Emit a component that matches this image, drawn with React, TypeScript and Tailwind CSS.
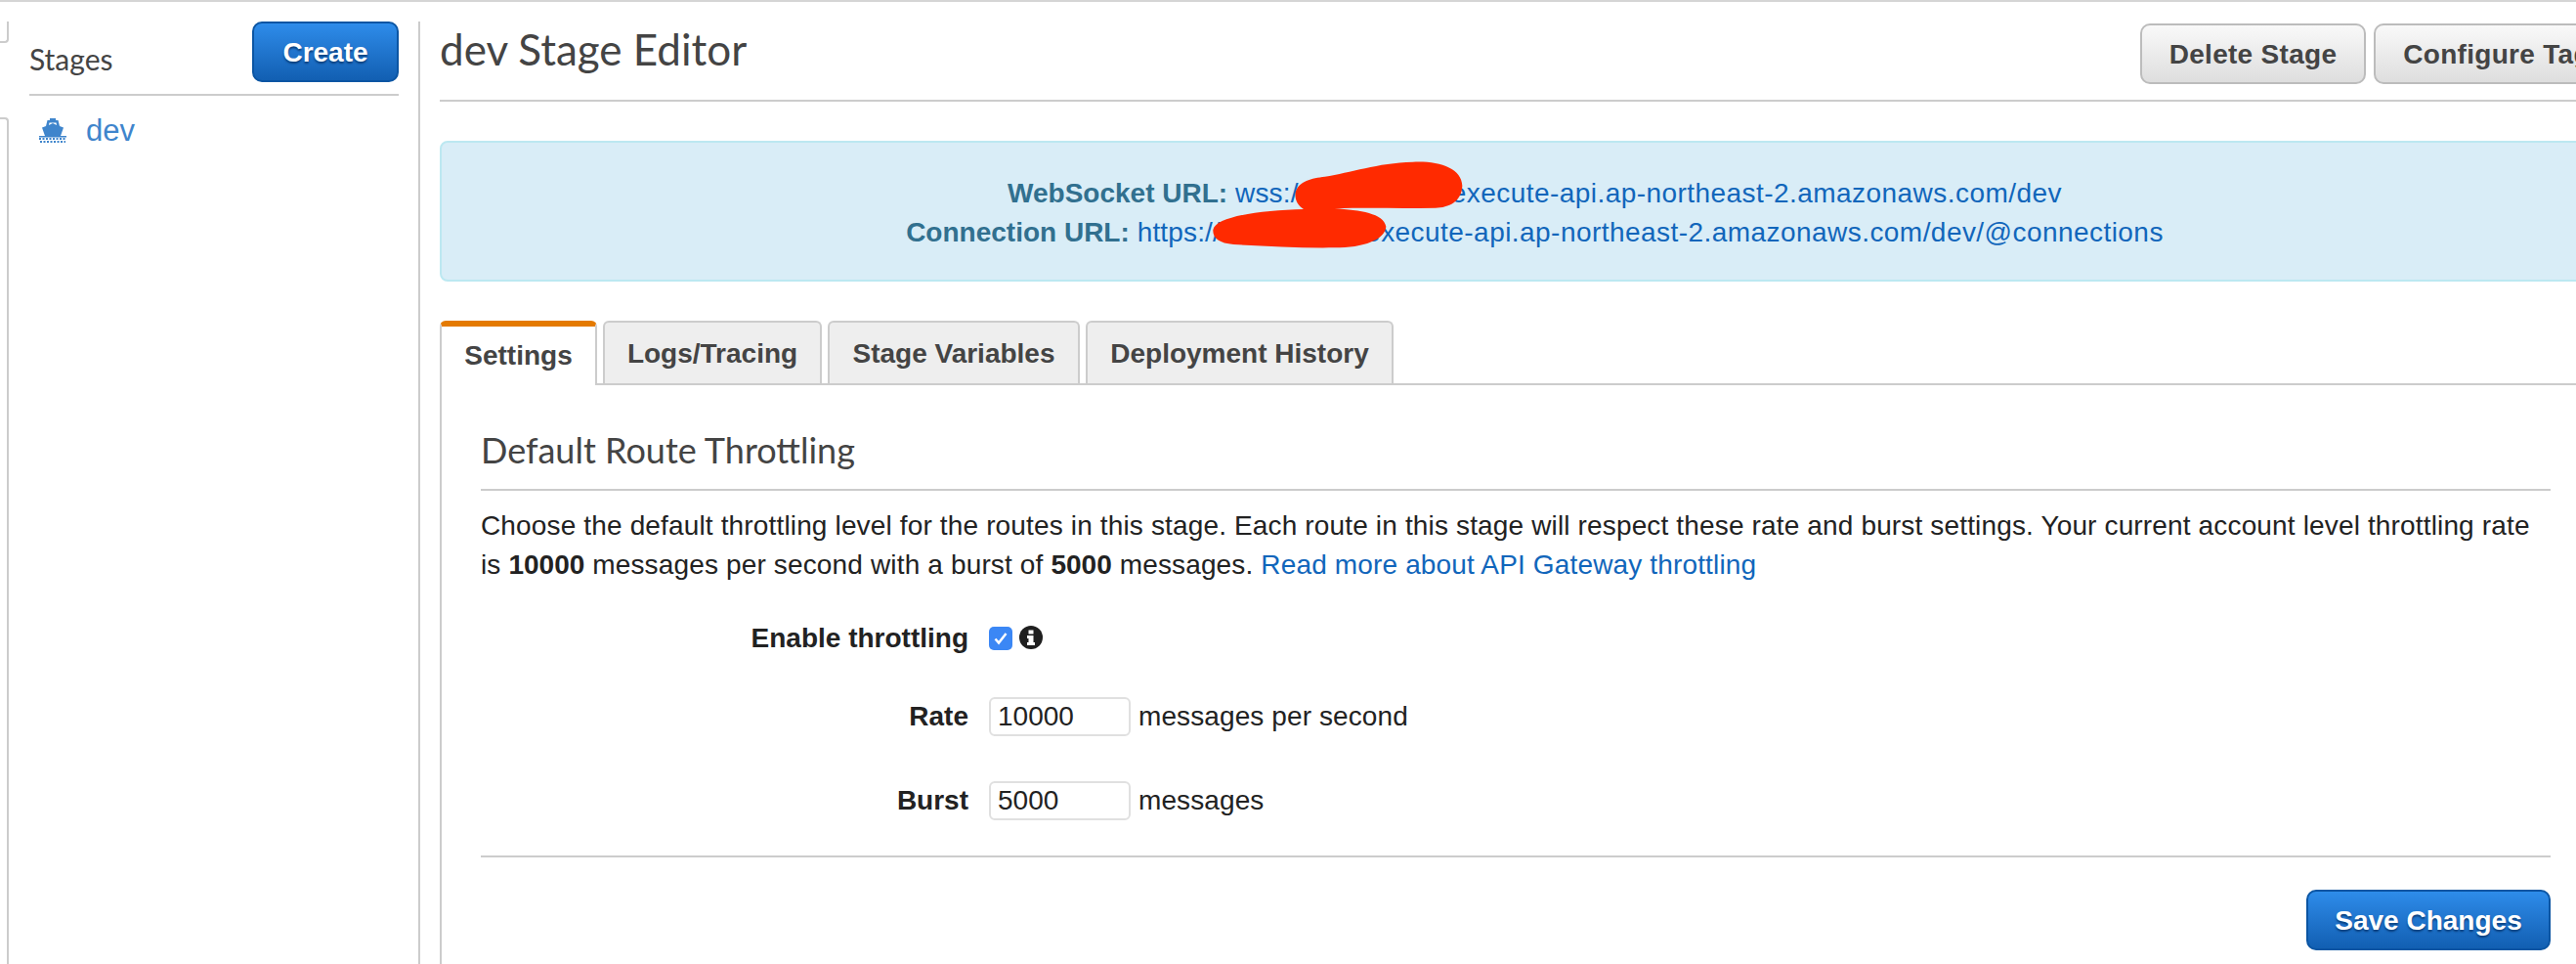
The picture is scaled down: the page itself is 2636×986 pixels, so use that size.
const Ship = () => (
  <svg width="28" height="26" viewBox="0 0 28 26" className="shrink-0 text-[#3f85cc]" fill="currentColor">
    <path fillRule="evenodd" d="M11 0h6v2h2.500l1.500 6 4 1.500-3 8.500H6L3 9.500 7 8l1.500-6H11zM10 7l4-2 4 2-.5-2.500h-7z" />
    <path d="M0 18h28v1.500H0z" />
    <path d="M0 21h28" stroke="currentColor" strokeWidth="2" strokeDasharray="2 1.500" />
    <path d="M1 24h26" stroke="currentColor" strokeWidth="2" strokeDasharray="2 1.500" />
  </svg>
)

const InfoIcon = () => (
  <svg width="24" height="24" viewBox="0 0 24 24" className="mt-[-3px] shrink-0">
    <circle cx="12" cy="12" r="12" fill="#1f1f1f" />
    <path d="M9.500 4.500h5v4h-5zM8 10h6.500v7H16v3H8v-3h1.500v-4H8z" fill="#fff" />
  </svg>
)

const Blob = () => (
  <svg width="400" height="120" viewBox="0 0 1200 360" className="absolute left-[727px] top-[4px]" fill="#ff2a00">
    <path d="M440 140C450 105 490 97 530 92C610 80 690 50 800 47C880 43 950 65 952 120C950 170 910 187 870 188C760 190 650 187 560 190C640 195 710 205 718 245C715 285 650 310 560 310C460 312 350 305 250 300C205 297 185 280 187 255C195 215 330 195 465 192C445 180 437 160 440 140Z" />
  </svg>
)

const GrayButton = ({ label, className }: { label: string; className: string }) => (
  <button className={`h-[62px] shrink-0 rounded-[10px] border-2 border-[#bcbcbc] bg-gradient-to-b from-[#f9f9f9] to-[#dedede] pt-[2px] text-[28px] font-bold tracking-[0.3px] text-[#444] ${className}`}>
    {label}
  </button>
)

const Tab = ({ label, className }: { label: string; className: string }) => (
  <div className={`flex h-[64px] items-center justify-center rounded-t-[6px] border-2 border-b-0 border-[#ccc] bg-[#eee] pt-[2px] text-[28px] font-bold text-[#444] ${className}`}>
    {label}
  </div>
)

const Row = ({ label, className, children }: { label: string; className: string; children: React.ReactNode }) => (
  <div className={`flex items-center ${className}`}>
    <div className="w-[499px] shrink-0 text-right font-bold text-[#222]">{label}</div>
    <div className="ml-[21px] flex items-center">{children}</div>
  </div>
)

const NumberField = ({ value }: { value: string }) => (
  <div className="flex h-[40px] w-[145px] items-center rounded-[6px] border-2 border-[#e0e0e0] bg-white pl-[7px] text-[#222]">{value}</div>
)

export default function App() {
  return (
    <div className="flex h-[986px] w-[2636px] overflow-hidden border-t-2 border-[#d5d5d5] bg-white font-['Liberation_Sans',Arial,sans-serif] text-[28px] leading-[40px]">
      <div className="flex w-[9px] shrink-0 flex-col pt-[20px]">
        <div className="h-[22px] rounded-br-[4px] border-r-2 border-b-2 border-[#ccc]"></div>
        <div className="mt-[76px] flex-1 rounded-tr-[4px] border-t-2 border-r-2 border-[#ccc]"></div>
      </div>

      <div className="ml-[21px] w-[378px] shrink-0 pt-[20px]">
        <div className="flex h-[76px] items-start justify-between border-b-2 border-[#ccc]">
          <div className="pt-[18px] font-['Lato',sans-serif] text-[30px] leading-[40px] text-[#444]">Stages</div>
          <button className="h-[62px] w-[150px] rounded-[10px] border-2 border-[#0b55a3] bg-gradient-to-b from-[#2e8cea] to-[#125fb2] pt-[2px] font-bold text-white [text-shadow:0_2px_2px_#0b3f7c]">
            Create
          </button>
        </div>
        <div className="mt-[16px] flex items-center pl-[10px] text-[#3f85cc]">
          <Ship />
          <span className="ml-[20px] text-[31px] leading-[40px]">dev</span>
        </div>
      </div>

      <div className="ml-[20px] mt-[20px] w-[2px] shrink-0 bg-[#ccc]"></div>

      <div className="ml-[20px] w-[2241px] shrink-0 pt-[22px]">
        <div className="flex h-[80px] items-start justify-between border-b-2 border-[#ccc]">
          <h1 className="pt-[2px] font-['Lato',sans-serif] text-[44px] leading-[48px] text-[#444]">dev Stage Editor</h1>
          <div className="flex gap-[8px]">
            <GrayButton label="Delete Stage" className="w-[231px]" />
            <GrayButton label="Configure Tags" className="w-[262px] pl-[6px]" />
          </div>
        </div>

        <div className="relative mt-[40px] flex h-[144px] flex-col items-center justify-center rounded-[8px] border-2 border-[#bce8f1] bg-[#d9edf7] pt-[3px] tracking-[0.15px] text-[#1166bb]">
          <div><b className="tracking-normal text-[#31708f]">WebSocket URL:</b> wss://a1b2c3d4e<span className="tracking-[0.45px]">.execute-api.ap-northeast-2.amazonaws.com/dev</span></div>
          <div><b className="tracking-normal text-[#31708f]">Connection URL:</b> https://a1b2c3d4e<span className="tracking-[0.45px]">.execute-api.ap-northeast-2.amazonaws.com/dev/@connections</span></div>
          <Blob />
        </div>

        <div className="mt-[40px] flex items-end gap-[6px] border-b-2 border-[#ccc]">
          <div className="mb-[-2px] flex h-[66px] w-[161px] items-center justify-center rounded-t-[6px] border-x-2 border-t-[6px] border-x-[#ccc] border-t-[#e47a00] bg-white font-bold text-[#444]">
            Settings
          </div>
          <Tab label="Logs/Tracing" className="w-[224px]" />
          <Tab label="Stage Variables" className="w-[258px]" />
          <Tab label="Deployment History" className="w-[315px]" />
        </div>

        <div className="h-[600px] border-l-2 border-[#ccc] pl-[40px] pr-[81px] pt-[41px]">
          <h2 className="border-b-2 border-[#ccc] pb-[15px] font-['Lato',sans-serif] text-[36px] leading-[50px] text-[#444]">Default Route Throttling</h2>
          <p className="mt-[16px] tracking-[0.15px] text-[#222]">
            Choose the default throttling level for the routes in this stage. Each route in this stage will respect these rate and burst settings. Your current account level throttling rate
            <br />
            is <b className="tracking-normal">10000</b> messages per second with a burst of <b className="tracking-normal">5000</b> messages. <a className="text-[#1166bb]">Read more about API Gateway throttling</a>
          </p>
          <Row label="Enable throttling" className="mt-[35px]">
            <div className="flex h-[24px] w-[24px] items-center justify-center rounded-[5px] bg-[#3b87f5]">
              <svg width="18" height="18" viewBox="0 0 18 18" fill="none" stroke="#fff" strokeWidth="2.500">
                <path d="M3.500 9.500l3.500 4L14.500 4" />
              </svg>
            </div>
            <div className="ml-[7px]"><InfoIcon /></div>
          </Row>
          <Row label="Rate" className="mt-[40px]">
            <NumberField value="10000" />
            <span className="ml-[8px] tracking-[0.1px] text-[#222]">messages per second</span>
          </Row>
          <Row label="Burst" className="mt-[46px]">
            <NumberField value="5000" />
            <span className="ml-[8px] tracking-[0.1px] text-[#222]">messages</span>
          </Row>
          <div className="mt-[36px] border-t-2 border-[#ccc] pt-[33px] text-right">
            <button className="h-[62px] w-[250px] rounded-[10px] border-2 border-[#0b55a3] bg-gradient-to-b from-[#2e8cea] to-[#125fb2] pt-[2px] font-bold text-white [text-shadow:0_2px_2px_#0b3f7c]">
              Save Changes
            </button>
          </div>
        </div>
      </div>
    </div>
  )
}
